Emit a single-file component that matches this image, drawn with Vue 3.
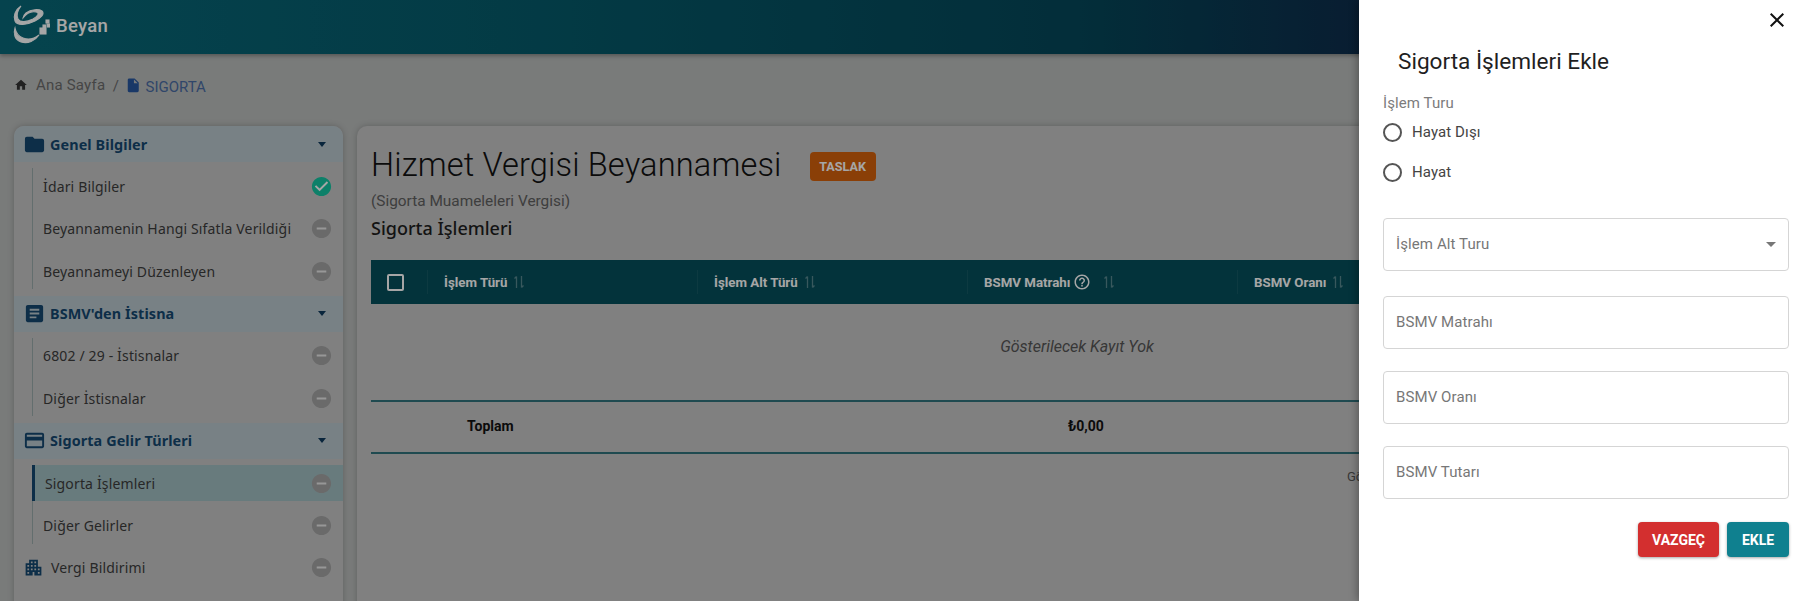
<script setup>
const icons = {
  folder: 'M10 4H4c-1.1 0-1.99.9-1.99 2L2 18c0 1.1.9 2 2 2h16c1.1 0 2-.9 2-2V8c0-1.1-.9-2-2-2h-8l-2-2z',
  article: 'M19 3H5c-1.1 0-2 .9-2 2v14c0 1.1.9 2 2 2h14c1.1 0 2-.9 2-2V5c0-1.1-.9-2-2-2zm-5 14H7v-2h7v2zm3-4H7v-2h10v2zm0-4H7V7h10v2z',
  card: 'M20 4H4c-1.11 0-1.99.89-1.99 2L2 18c0 1.11.89 2 2 2h16c1.11 0 2-.89 2-2V6c0-1.11-.89-2-2-2zm0 14H4v-6h16v6zm0-10H4V6h16v2z',
  building: 'M17 11V3H7v4H3v14h8v-4h2v4h8V11h-4zM7 19H5v-2h2v2zm0-4H5v-2h2v2zm0-4H5V9h2v2zm4 4H9v-2h2v2zm0-4H9V9h2v2zm0-4H9V5h2v2zm4 8h-2v-2h2v2zm0-4h-2V9h2v2zm0-4h-2V5h2v2zm4 12h-2v-2h2v2zm0-4h-2v-2h2v2z'
}
const check = 'M12 2C6.48 2 2 6.48 2 12s4.48 10 10 10 10-4.48 10-10S17.52 2 12 2zm-2 15l-5-5 1.41-1.41L10 14.17l7.59-7.59L19 8l-9 9z'
const minus = 'M12 2C6.48 2 2 6.48 2 12s4.48 10 10 10 10-4.48 10-10S17.52 2 12 2zm5 11H7v-2h10v2z'

const sections = [
  { title: 'Genel Bilgiler', icon: icons.folder, items: [
    { label: 'İdari Bilgiler', done: true },
    { label: 'Beyannamenin Hangi Sıfatla Verildiği' },
    { label: 'Beyannameyi Düzenleyen' }
  ] },
  { title: "BSMV'den İstisna", icon: icons.article, items: [
    { label: '6802 / 29 - İstisnalar' },
    { label: 'Diğer İstisnalar' }
  ] },
  { title: 'Sigorta Gelir Türleri', icon: icons.card, items: [
    { label: 'Sigorta İşlemleri', active: true },
    { label: 'Diğer Gelirler' }
  ] }
]
const columns = [
  { label: 'İşlem Türü' },
  { label: 'İşlem Alt Türü' },
  { label: 'BSMV Matrahı', help: true },
  { label: 'BSMV Oranı' }
]
const fields = ['BSMV Matrahı', 'BSMV Oranı', 'BSMV Tutarı']
</script>

<template>
  <div class="page">
    <header class="topbar">
      <svg class="logo" viewBox="0 0 50 46" width="50" height="46">
        <path d="M21 5C15 9 13 15 15 20C17 25 27 24 35 20C41 17 45 13 42 10C39 8 31 8 26 12C24 14 23 16 23 17C26 13 31 10 36 11C40 12 38 15 33 18C27 21 20 22 18 18C16 14 18 9 21 5Z" />
        <path d="M15 27C13 33 15 39 21 41C28 43 35 40 39 34C34 38 28 39 23 37C18 35 16 32 15 27Z" />
        <rect x="40" y="27" width="6" height="6" />
        <rect x="46" y="19" width="3" height="3" />
        <rect x="47" y="23" width="3" height="3" />
        <rect x="43" y="24" width="2.5" height="2.5" />
      </svg>
      <span class="brand">Beyan</span>
    </header>

    <nav class="crumbs">
      <svg class="crumb-home" viewBox="0 0 24 24" width="14" height="14"><path d="M10 20v-6h4v6h5v-8h3L12 3 2 12h3v8z" /></svg>
      <span class="crumb-text">Ana Sayfa</span>
      <span class="crumb-sep">/</span>
      <svg class="crumb-file" viewBox="0 0 24 24" width="16.5" height="16.5"><path d="M14 2H6c-1.1 0-1.99.9-1.99 2L4 20c0 1.1.89 2 1.99 2H18c1.1 0 2-.9 2-2V8l-6-6zm-1 7V3.5L18.5 9H13z" /></svg>
      <span class="crumb-current">SIGORTA</span>
    </nav>

    <div class="columns">
      <aside class="side">
        <template v-for="s in sections" :key="s.title">
          <div class="sec-head">
            <svg class="sec-icon" viewBox="0 0 24 24" width="23" height="23"><path :d="s.icon" /></svg>
            <span class="sec-title">{{ s.title }}</span>
            <span class="caret"></span>
          </div>
          <div class="sub">
            <div v-for="i in s.items" :key="i.label" class="item" :class="{ active: i.active }">
              <span class="item-label">{{ i.label }}</span>
              <svg class="status" :class="{ done: i.done }" viewBox="0 0 24 24" width="23" height="23"><circle class="status-bg" cx="12" cy="12" r="8" /><path :d="i.done ? check : minus" /></svg>
            </div>
          </div>
        </template>
        <div class="sec-plain">
          <svg class="sec-icon" viewBox="0 0 24 24" width="21" height="21"><path :d="icons.building" /></svg>
          <span class="item-label plain-label">Vergi Bildirimi</span>
          <svg class="status" viewBox="0 0 24 24" width="23" height="23"><circle class="status-bg" cx="12" cy="12" r="8" /><path :d="minus" /></svg>
        </div>
      </aside>

      <main class="content">
        <div class="title-row">
          <h1 class="title">Hizmet Vergisi Beyannamesi</h1>
          <span class="badge">TASLAK</span>
        </div>
        <p class="subtitle">(Sigorta Muameleleri Vergisi)</p>
        <h2 class="sec-heading">Sigorta İşlemleri</h2>

        <div class="table">
          <div class="thead">
            <div class="th-check"><span class="checkbox"></span></div>
            <div v-for="c in columns" :key="c.label" class="th">
              <span>{{ c.label }}</span>
              <svg v-if="c.help" class="help" viewBox="0 0 24 24" width="18" height="18"><path d="M11 18h2v-2h-2v2zm1-16C6.48 2 2 6.48 2 12s4.48 10 10 10 10-4.48 10-10S17.52 2 12 2zm0 18c-4.41 0-8-3.59-8-8s3.59-8 8-8 8 3.59 8 8-3.59 8-8 8zm0-14c-2.21 0-4 1.79-4 4h2c0-1.1.9-2 2-2s2 .9 2 2c0 2-3 1.75-3 5h2c0-2.25 3-2.5 3-5 0-2.21-1.79-4-4-4z" /></svg>
              <svg class="sort" viewBox="0 0 12 14" width="12" height="14"><path d="M3.5 13V1.5M1.5 3.5l2-2M8.5 1v11.5M8.5 12.5l2-2" /></svg>
            </div>
          </div>
          <div class="empty">Gösterilecek Kayıt Yok</div>
          <div class="tfoot">
            <div class="foot-label">Toplam</div>
            <div class="foot-value">₺0,00</div>
          </div>
          <div class="pager">Gö</div>
        </div>
      </main>
    </div>

    <div class="overlay"></div>

    <section class="drawer">
      <div class="close-row">
        <svg viewBox="0 0 24 24" width="24" height="24"><path d="M19 6.41L17.59 5 12 10.59 6.41 5 5 6.41 10.59 12 5 17.59 6.41 19 12 13.41 17.59 19 19 17.59 13.41 12z" /></svg>
      </div>
      <h3 class="drawer-title">Sigorta İşlemleri Ekle</h3>
      <div class="group-label">İşlem Turu</div>
      <div class="radio"><span class="dot"></span><span>Hayat Dışı</span></div>
      <div class="radio"><span class="dot"></span><span>Hayat</span></div>
      <div class="field select"><span>İşlem Alt Turu</span><span class="select-caret"></span></div>
      <div v-for="f in fields" :key="f" class="field"><span>{{ f }}</span></div>
      <div class="actions">
        <button class="btn danger">VAZGEÇ</button>
        <button class="btn primary">EKLE</button>
      </div>
    </section>
  </div>
</template>

<style>
html, body { margin: 0; padding: 0; overflow: hidden; }
</style>

<style scoped>
* { box-sizing: border-box; }
.page {
  position: relative;
  width: 1800px;
  height: 601px;
  overflow: hidden;
  background: #babdbc;
  font-family: Roboto, "Liberation Sans", sans-serif;
}
.topbar {
  height: 54px;
  display: flex;
  align-items: center;
  padding-left: 12px;
  background: linear-gradient(90deg, #086878 0%, #065a6a 30%, #054759 60%, #0f294a 78%);
  box-shadow: 0 2px 4px rgba(0,0,0,.3);
}
.logo { fill: #fff; stroke: #fff; stroke-width: 1.1; margin-top: -6px; margin-left: -12px; margin-right: 6px; flex: none; }
.brand { color: #fff; font-size: 18.5px; font-weight: 500; letter-spacing: .3px; margin-top: -3px; }
.crumbs {
  height: 72px;
  padding: 21px 0 0 14px;
  display: flex;
  align-items: flex-start;
  font-size: 15px;
  line-height: 22px;
}
.crumb-home { fill: #333; margin: 3px 8px 0 0; }
.crumb-text { color: #6b6b6b; margin-top: -1px; letter-spacing: .2px; }
.crumb-sep { color: #6b6b6b; margin: 0 6.5px 0 7.5px; }
.crumb-file { fill: #27579f; margin: 2px 3.5px 0 0; }
.crumb-current { color: #4a6ca3; margin-top: 1px; }
.columns { display: flex; gap: 14px; padding-left: 14px; }
.side {
  width: 329px;
  flex: none;
  height: 520px;
  display: flex;
  flex-direction: column;
  gap: 6.4px;
  background: #c5c5c5;
  border-radius: 10px;
  box-shadow: 0 0 6px rgba(0,0,0,.22);
  overflow: hidden;
}
.sec-head, .sec-plain {
  height: 36px;
  flex: none;
  display: flex;
  align-items: center;
  padding: 0 10px 0 9px;
}
.sec-head { background: #b9c7cd; }
.sec-icon { fill: #14476f; flex: none; margin-right: 4px; }
.sec-title {
  flex: 1;
  font-family: "Noto Sans", sans-serif;
  font-size: 14.4px;
  font-weight: 700;
  color: #14476f;
  letter-spacing: .1px;
}
.caret {
  width: 0; height: 0;
  margin-right: 7px;
  border-left: 4.5px solid transparent;
  border-right: 4.5px solid transparent;
  border-top: 5px solid #0f3a5c;
}
.sub {
  margin-left: 18px;
  border-left: 1px solid #98aaaa;
  display: flex;
  flex-direction: column;
  gap: 6.4px;
}
.item {
  height: 36px;
  display: flex;
  align-items: center;
  justify-content: space-between;
  padding: 0 10px;
}
.item.active {
  margin-left: -1px;
  border-left: 3px solid #14476f;
  background: #a0bdc0;
}
.item-label {
  font-family: "Noto Sans", sans-serif;
  font-size: 14px;
  color: #3c3c3c;
  letter-spacing: .15px;
}
.plain-label { flex: 1; margin-left: 3px; }
.status { fill: #a3a3a3; flex: none; }
.status .status-bg { fill: #e8e8e8; }
.status.done { fill: #14c5a2; }
.status.done .status-bg { fill: #fff; }
.content {
  width: 1440px;
  flex: none;
  height: 520px;
  padding: 14px;
  background: #c5c5c5;
  border-radius: 10px;
  box-shadow: 0 0 6px rgba(0,0,0,.22);
}
.title-row { display: flex; align-items: center; height: 50px; }
.title {
  margin: 0;
  font-size: 32.6px;
  font-weight: 300;
  color: #111;
  letter-spacing: .15px;
}
.badge {
  margin: 3px 0 0 28px;
  width: 66px;
  height: 29px;
  display: flex;
  align-items: center;
  justify-content: center;
  background: #d4620c;
  border-radius: 4px;
  color: #fff;
  font-size: 12.6px;
  font-weight: 700;
}
.subtitle {
  margin: 2px 0 0;
  font-size: 15.4px;
  line-height: 18px;
  color: #606060;
}
.sec-heading {
  margin: 6px 0 0;
  font-family: "Noto Sans", sans-serif;
  font-size: 18px;
  line-height: 24px;
  font-weight: 500;
  color: #1e1e1e;
}
.table { margin-top: 20px; width: 1412px; }
.thead {
  height: 44px;
  display: flex;
  background: #064f5b;
  align-items: center;
}
.th-check { width: 56px; padding-left: 16px; display: flex; align-items: center; }
.checkbox { width: 17px; height: 17px; border: 2px solid #fff; border-radius: 2px; }
.th {
  width: 270px;
  height: 24px;
  padding-left: 16px;
  display: flex;
  align-items: center;
  gap: 6px;
  color: #fff;
  font-size: 13.3px;
  font-weight: 700;
  border-left: 1px solid rgba(255,255,255,.06);
}
.th:first-of-type { border-left: none; padding-left: 15px; }
.help { fill: #fff; margin-left: -3px; }
.sort {
  fill: none;
  stroke: rgba(255,255,255,.32);
  stroke-width: 1.3;
  flex: none;
}
.th .help + .sort { margin-left: 6px; }
.empty {
  height: 96px;
  padding-bottom: 12px;
  display: flex;
  align-items: center;
  justify-content: center;
  font-size: 16px;
  font-style: italic;
  color: #555;
}
.tfoot {
  height: 54px;
  padding-bottom: 2px;
  display: flex;
  align-items: center;
  border-top: 2px solid #30727b;
  border-bottom: 2px solid #30727b;
  font-size: 14px;
  font-weight: 700;
  color: #111;
}
.foot-label { width: 697px; padding-left: 96px; }
.pager {
  padding-left: 976px;
  margin-top: 15px;
  font-size: 13px;
  color: #555;
  white-space: nowrap;
}
.overlay {
  position: absolute;
  inset: 0;
  background: rgba(0,0,0,.35);
}
.drawer {
  position: absolute;
  top: 0;
  right: 0;
  bottom: 0;
  width: 441px;
  padding: 0 11px 0 24px;
  background: #fff;
  box-shadow: -2px 0 8px rgba(0,0,0,.3);
  display: flex;
  flex-direction: column;
}
.close-row { height: 40px; display: flex; justify-content: flex-end; align-items: center; }
.close-row svg { fill: #111; }
.drawer-title {
  margin: 7px 0 0 15px;
  font-size: 22.6px;
  line-height: 30px;
  font-weight: 400;
  color: #1f1f1f;
}
.group-label {
  margin-top: 15px;
  height: 20px;
  line-height: 22px;
  font-size: 15px;
  letter-spacing: .1px;
  color: #7c7c7c;
}
.radio {
  height: 40px;
  display: flex;
  align-items: center;
  gap: 10px;
  font-size: 15px;
  color: #444;
  letter-spacing: .1px;
}
.dot { width: 19px; height: 19px; border: 2px solid #555; border-radius: 50%; }
.field {
  height: 53px;
  margin-top: 22px;
  border: 1px solid #d5d5d5;
  border-radius: 4px;
  padding: 0 12px 2px;
  display: flex;
  align-items: center;
  font-size: 15px;
  letter-spacing: .1px;
  color: #777;
}
.select { margin-top: 26px; justify-content: space-between; }
.select + .field { margin-top: 25px; }
.select-caret {
  width: 0; height: 0;
  border-left: 5px solid transparent;
  border-right: 5px solid transparent;
  border-top: 5.5px solid #777;
  margin-top: 2px;
}
.actions { margin-top: 23px; display: flex; justify-content: flex-end; gap: 8px; }
.btn {
  height: 35px;
  border: none;
  border-radius: 4px;
  color: #fff;
  font-family: Roboto, sans-serif;
  font-size: 14px;
  font-weight: 700;
  box-shadow: 0 1px 3px rgba(0,0,0,.35);
}
.danger { width: 81px; background: #d32f2f; }
.primary { width: 62px; background: #0f808f; }
</style>
